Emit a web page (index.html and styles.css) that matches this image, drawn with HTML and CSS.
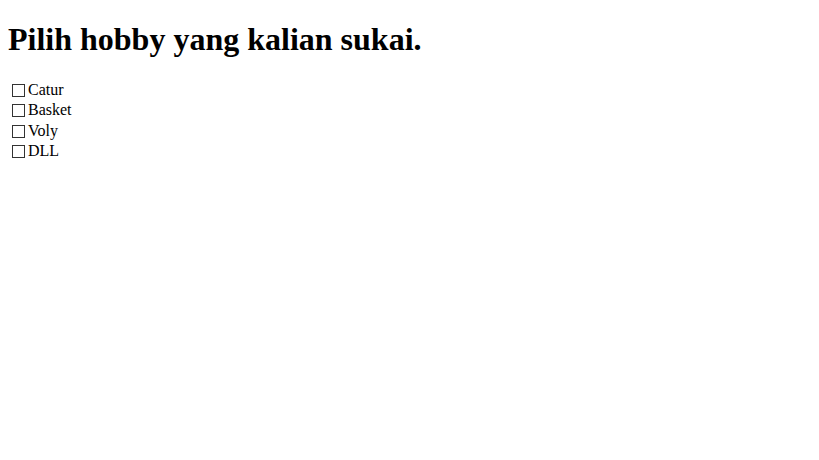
FILE: index.html
```html
<!DOCTYPE html>
<html lang="id">
<head>
    <meta charset="UTF-8">
    <title>Hobby</title>
    <link rel="stylesheet" href="styles.css">
</head>
<body>
    <h1 class="title">Pilih hobby yang kalian sukai.</h1>
    <form class="hobbyList">
        <input type="checkbox" class="hobby" name="hobby" value="catur">Catur<br>
        <input type="checkbox" class="hobby" name="hobby" value="basket">Basket<br>
        <input type="checkbox" class="hobby" name="hobby" value="voly">Voly<br>
        <input type="checkbox" class="hobby" name="hobby" value="dll">DLL<br>
    </form>
</body>
</html>
```

FILE: styles.css
```css
body {
    font-family: "Liberation Serif", "Times New Roman", serif;
}

.title {
    margin: 13px 0 22px;
}

.hobbyList {
    line-height: 20.3px;
}

.hobby {
    appearance: none;
    -webkit-appearance: none;
    width: 13px;
    height: 13px;
    margin: 0 3px 0 4px;
    border: 1px solid #333;
    background: #fff;
    box-sizing: border-box;
    vertical-align: -2px;
}
```
